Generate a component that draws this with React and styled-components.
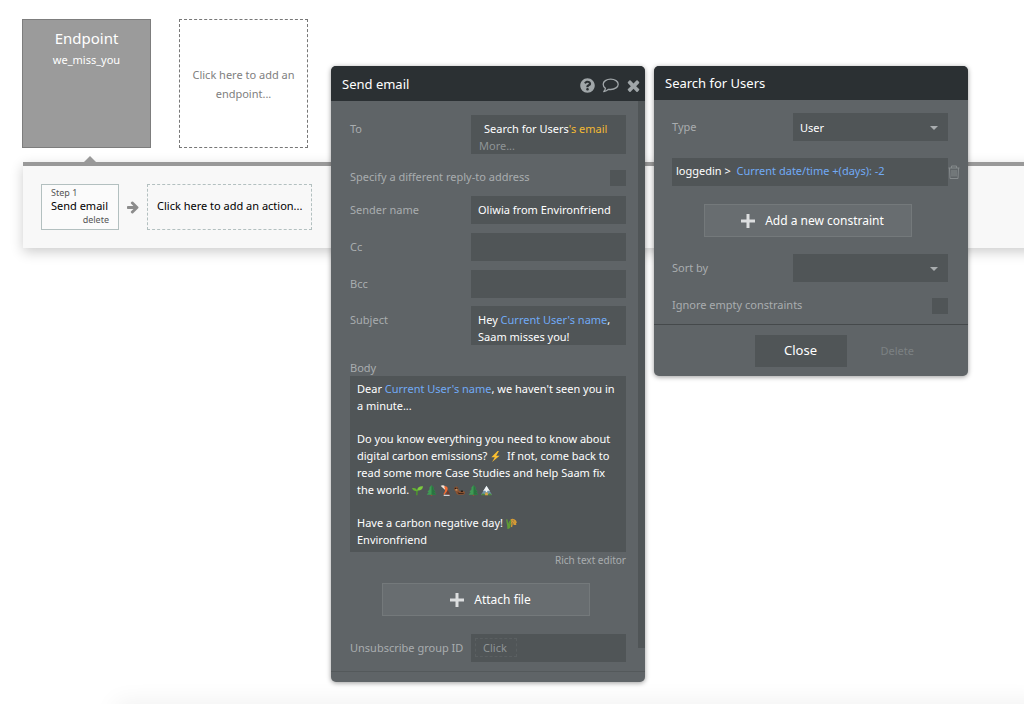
import React from 'react';
import styled, { createGlobalStyle } from 'styled-components';
import { FaQuestionCircle } from 'react-icons/fa';

const Icon = ({ size = 14, width, height, box = '0 0 16 16', children }) => (
    <svg
        width={width || size}
        height={height || size}
        viewBox={box}
        aria-hidden="true"
    >
        {children}
    </svg>
);

const ArrowIcon = () => (
    <Icon size={14} box="0 0 1792 1792">
        <path
            fill="currentColor"
            d="M1600 960q0 54-37 91l-651 651q-39 37-91 37-51 0-90-37l-75-75q-38-38-38-91t38-91l293-293H245q-52 0-84.5-37.5T128 1024V896q0-53 32.5-90.5T245 768h704L656 474q-38-36-38-90t38-90l75-75q38-38 90-38 53 0 91 38l651 651q37 35 37 90z"
        />
    </Icon>
);

const CommentIcon = () => (
    <Icon width={17} height={15} box="0 0 17 15">
        <path
            fill="none"
            stroke="currentColor"
            strokeWidth="1.3"
            strokeLinejoin="round"
            d="M8.7 1.200c4.200 0 7.500 2.200 7.500 5s-3.300 5.300-7.500 5.300c-.8 0-1.500-.1-2.200-.2-1.200 1.200-2.800 2-4.700 2.300 1-.9 1.500-2 1.600-3.300C2 9.300 1.200 7.800 1.200 6.200c0-2.800 3.300-5 7.500-5z"
        />
    </Icon>
);

const TimesIcon = () => (
    <Icon size={15} box="128 128 1536 1536">
        <path
            fill="currentColor"
            d="M1490 1322q0 40-28 68l-136 136q-28 28-68 28t-68-28l-294-294-294 294q-28 28-68 28t-68-28l-136-136q-28-28-28-68t28-68l294-294-294-294q-28-28-28-68t28-68l136-136q28-28 68-28t68 28l294 294 294-294q28-28 68-28t68 28l136 136q28 28 28 68t-28 68l-294 294 294 294q28 28 28 68z"
        />
    </Icon>
);

const PlusIcon = () => (
    <Icon size={14} box="0 0 14 14">
        <path fill="currentColor" d="M5.500 0h3v5.500H14v3H8.500V14h-3V8.500H0v-3h5.500z" />
    </Icon>
);

const TrashIcon = () => (
    <Icon width={12} height={14} box="0 0 12 14">
        <g fill="none" stroke="currentColor">
            <path d="M.5 3h11M3.500 3V1h5v2M1.500 3l.5 10.500h8L10.500 3" />
            <path d="M4 5v6.500M6 5v6.500M8 5v6.500" />
        </g>
    </Icon>
);

const emoji = {
    bolt: <path fill="#fbbf2f" d="M11 0 2 9h5l-4 7L14 7H9l4-7z" />,
    seedling: (
        <>
            <path fill="none" stroke="#4c9a2c" strokeWidth="2" d="M7 15c0-4 0-6 1-8" />
            <path fill="#63b233" d="M7.500 9C3 9.500 1 7 0 4.500 4 3.500 7 5 7.500 9z" />
            <path fill="#7ccb3e" d="M7.500 8C8 3.500 11 1.500 16 2c-.5 4-3.500 6.500-8.500 6z" />
        </>
    ),
    tree: (
        <>
            <path fill="#8a5530" d="M7 13h2v3H7z" />
            <path fill="#3f9a54" d="m8 0 4 5h-2l4 5h-2l3 4H1l3-4H2l4-5H4z" />
            <path fill="#2a7440" d="m8 0 4 5h-2l4 5h-2l3 4H8z" />
        </>
    ),
    climber: (
        <>
            <path fill="#6e3a2c" d="M10 7c3 2 4 5 5 8H8c2-2 3-4 2-8z" />
            <path fill="#f4e7dc" d="M1 1c4-2 7 0 7 3l-1 3C6 5 3 4 1 1z" />
            <path fill="#f06a32" d="M6 2c4-1 6 2 5 5-1 3-3 5-5 8l-1-2c2-3 3-5 2-8z" />
            <path fill="#cfd2d6" d="M6 14h8v2H5z" />
        </>
    ),
    otter: (
        <>
            <path
                fill="#8a5332"
                d="M0 5c0-3 5-4 6-1 1 2 0 4 3 5h5c3 0 2 5 0 5H6c-3 0-3-3-4-5-1-1-2-2-2-4z"
            />
            <path fill="#2b1a12" d="M1 4h2v2H1zM4 4h1v2H4zM5 10l3 2h6v1H7zM10 8h3v2h-3z" />
            <path fill="#d39c6c" d="M2 6h3v2H2z" />
        </>
    ),
    mountain: (
        <>
            <path fill="#6f93a8" d="m8 1 8 13H0z" />
            <path fill="#f3f5f6" d="m8 1 5 8-3-1-2 3-2-3-3 1z" />
            <path fill="#4b8a3a" d="M0 15c2-4 5-3 6 0zM10 15c1-4 4-4 6 0z" />
            <path fill="#d9a441" d="M6 11h4v4H6z" />
        </>
    ),
    rice: (
        <>
            <path
                fill="none"
                stroke="#5f9b35"
                strokeWidth="2"
                d="M3 16C3 9 5 5 8 3M1 2c1 5 2 9 2 14M5 15c0-4 1-7 3-9"
            />
            <path
                fill="none"
                stroke="#d59a35"
                strokeWidth="2"
                d="M7 3c3-2 7 0 8 4M8 4c2 0 4 3 4 6M8 5c1 2 1 5 0 8M11 3c1 0 3 4 3 7"
            />
        </>
    ),
};

const Emoji = ({ name, label }) => (
    <EmojiBox role="img" aria-label={label}>
        <Icon size={11}>{emoji[name]}</Icon>
    </EmojiBox>
);

function SendEmailWindow() {
    return (
        <SendWindow aria-label="Send email">
            <Header>
                <Title>Send email</Title>
                <HeaderIcons>
                    <IconButton aria-label="Help">
                        <FaQuestionCircle size={15} />
                    </IconButton>
                    <IconButton aria-label="Comment">
                        <CommentIcon />
                    </IconButton>
                    <IconButton aria-label="Close window">
                        <TimesIcon />
                    </IconButton>
                </HeaderIcons>
            </Header>
            <Scroller>
                <Form>
                    <Row>
                        <Label id="to">To</Label>
                        <RichField
                            role="textbox"
                            aria-labelledby="to"
                            contentEditable
                            suppressContentEditableWarning
                        >
                            <Indent>
                                Search for Users<Operator>'s email</Operator>
                            </Indent>
                            <Muted>More...</Muted>
                        </RichField>
                    </Row>
                    <Row $top={16}>
                        <Label as="label" htmlFor="replyTo" $inline>
                            Specify a different reply-to address
                        </Label>
                        <Checkbox id="replyTo" />
                    </Row>
                    <Row $top={10}>
                        <Label as="label" htmlFor="sender">Sender name</Label>
                        <TextInput id="sender" defaultValue="Oliwia from Environfriend" />
                    </Row>
                    <Row $top={9}>
                        <Label as="label" htmlFor="cc">Cc</Label>
                        <TextInput id="cc" />
                    </Row>
                    <Row $top={9}>
                        <Label as="label" htmlFor="bcc">Bcc</Label>
                        <TextInput id="bcc" />
                    </Row>
                    <Row $top={8}>
                        <Label id="subject">Subject</Label>
                        <RichField
                            role="textbox"
                            aria-labelledby="subject"
                            contentEditable
                            suppressContentEditableWarning
                        >
                            Hey <Dynamic>Current User's name</Dynamic>, Saam misses you!
                        </RichField>
                    </Row>
                    <BodyLabel id="body">Body</BodyLabel>
                    <BodyField
                        role="textbox"
                        aria-multiline="true"
                        aria-labelledby="body"
                        contentEditable
                        suppressContentEditableWarning
                    >
                        <p>
                            Dear <Dynamic>Current User's name</Dynamic>, we haven't
                            seen you in a minute...
                        </p>
                        <p>
                            Do you know everything you need to know about digital
                            carbon emissions? <Emoji name="bolt" label="lightning" />
                            &nbsp; If not, come back to read some more Case Studies
                            and help Saam fix the world.{' '}
                            <Emoji name="seedling" label="seedling" />{' '}
                            <Emoji name="tree" label="tree" />{' '}
                            <Emoji name="climber" label="climber" />{' '}
                            <Emoji name="otter" label="otter" />{' '}
                            <Emoji name="tree" label="tree" />{' '}
                            <Emoji name="mountain" label="mountain" />
                        </p>
                        <p>
                            Have a carbon negative day! <Emoji name="rice" label="rice" />
                            <br />
                            Environfriend
                        </p>
                    </BodyField>
                    <EditorLink href="#editor">Rich text editor</EditorLink>
                    <AddButton $top={14}>
                        <PlusIcon />
                        Attach file
                    </AddButton>
                    <Row $top={18}>
                        <Label as="label" htmlFor="group">Unsubscribe group ID</Label>
                        <GroupField>
                            <GroupInput id="group" placeholder="Click" />
                        </GroupField>
                    </Row>
                </Form>
                <WindowFoot />
            </Scroller>
        </SendWindow>
    );
}

function SearchWindow() {
    return (
        <SearchPanel aria-label="Search for Users">
            <Header $short>
                <Title>Search for Users</Title>
            </Header>
            <SearchForm>
                <Row>
                    <Label as="label" htmlFor="type">Type</Label>
                    <SelectWrap>
                        <Select id="type">
                            <option>User</option>
                        </Select>
                    </SelectWrap>
                </Row>
                <Constraint>
                    <ConstraintField
                        role="textbox"
                        aria-label="Constraint"
                        contentEditable
                        suppressContentEditableWarning
                    >
                        loggedin &gt;&nbsp; <Dynamic>Current date/time +(days): -2</Dynamic>
                    </ConstraintField>
                    <TrashButton aria-label="Remove constraint">
                        <TrashIcon />
                    </TrashButton>
                </Constraint>
                <AddButton $top={18}>
                    <PlusIcon />
                    Add a new constraint
                </AddButton>
                <Row $top={17}>
                    <Label as="label" htmlFor="sort">Sort by</Label>
                    <SelectWrap>
                        <Select id="sort">
                            <option> </option>
                        </Select>
                    </SelectWrap>
                </Row>
                <Row $top={16}>
                    <Label as="label" htmlFor="ignore" $inline>Ignore empty constraints</Label>
                    <Checkbox id="ignore" />
                </Row>
            </SearchForm>
            <Footer>
                <CloseButton>Close</CloseButton>
                <DeleteButton disabled>Delete</DeleteButton>
            </Footer>
        </SearchPanel>
    );
}

function App() {
    return (
        <Page>
            <GlobalStyle />
            <Endpoints>
                <Endpoint>
                    <EndpointType>Endpoint</EndpointType>
                    <EndpointName>we_miss_you</EndpointName>
                </Endpoint>
                <NewEndpoint>Click here to add an endpoint...</NewEndpoint>
            </Endpoints>
            <Workflow>
                <Step>
                    <StepNote>Step 1</StepNote>
                    <StepName>Send email</StepName>
                    <StepDelete>delete</StepDelete>
                </Step>
                <ArrowIcon />
                <NewAction>Click here to add an action...</NewAction>
            </Workflow>
            <SendEmailWindow />
            <SearchWindow />
        </Page>
    );
}

export default App;

const GlobalStyle = createGlobalStyle`
    * {
        box-sizing: border-box;
    }

    body {
        margin: 0;
        background: #fff;
        font-family: 'Noto Sans', 'Open Sans', sans-serif;
        font-size: 11px;
        line-height: 17px;
    }

    p {
        margin: 0;
    }

    button,
    input,
    select {
        margin: 0;
        padding: 0;
        border: 0;
        border-radius: 0;
        background: none;
        color: inherit;
        font: inherit;
    }
`;

const Page = styled.main`
    position: relative;
    min-height: 100vh;
    padding: 19px 0 0 22px;
    overflow: hidden;

    &::after {
        content: '';
        position: absolute;
        right: -20px;
        bottom: -12px;
        left: 116px;
        height: 10px;
        box-shadow: 0 0 24px rgba(0, 0, 0, 0.12);
    }
`;

const Endpoints = styled.div`
    display: flex;
    gap: 28px;
`;

const Endpoint = styled.button`
    width: 129px;
    height: 129px;
    padding-top: 7px;
    border: 1px solid #7d7d7d;
    background: #9b9b9b;
    color: #fff;
    display: flex;
    flex-direction: column;
    align-items: center;
`;

const EndpointType = styled.span`
    font-size: 15px;
    line-height: 22px;
`;

const EndpointName = styled.span`
    line-height: 22px;
`;

const NewEndpoint = styled.button`
    width: 129px;
    height: 129px;
    padding: 0 8px;
    border: 1px dashed #777;
    color: #808080;
    line-height: 19px;
`;

const Workflow = styled.section`
    position: relative;
    display: flex;
    align-items: center;
    gap: 7px;
    margin: 14px -20px 0 1px;
    padding: 18px;
    border-top: 4px solid #999;
    background: #f8f8f8;
    color: #8c8c8c;
    box-shadow: 0 4px 12px rgba(0, 0, 0, 0.2);

    &::before {
        content: '';
        position: absolute;
        top: -10px;
        left: 60px;
        border: 7px solid transparent;
        border-top: 0;
        border-bottom-color: #999;
    }
`;

const Step = styled.div`
    width: 78px;
    height: 46px;
    padding: 0 9px;
    border: 1px solid #b3c0c0;
    background: #fbfbfb;
    display: flex;
    flex-direction: column;
`;

const StepNote = styled.span`
    color: #555;
    font-size: 9px;
    line-height: 15px;
`;

const StepName = styled.span`
    color: #000;
    line-height: 12px;
    white-space: nowrap;
`;

const StepDelete = styled.button`
    align-self: flex-end;
    color: #555;
    font-size: 9px;
    line-height: 15px;
`;

const NewAction = styled.button`
    height: 46px;
    padding: 0 9px 4px;
    border: 1px dashed #b3c0c0;
    color: #000;
`;

const Window = styled.section`
    position: absolute;
    top: 66px;
    width: 314px;
    border-radius: 5px;
    overflow: hidden;
    background: #5f6467;
    color: #fff;
    box-shadow: 0 1px 5px rgba(0, 0, 0, 0.4);
`;

const SendWindow = styled(Window)`
    left: 331px;
`;

const SearchPanel = styled(Window)`
    left: 654px;
`;

const Header = styled.header`
    display: flex;
    align-items: center;
    justify-content: space-between;
    height: ${(prop) => (prop.$short ? 34 : 35)}px;
    padding: 0 4px 0 11px;
    background: #2b3033;
`;

const Title = styled.h1`
    margin: 0;
    font-size: 13px;
    font-weight: 400;
    line-height: 20px;
`;

const HeaderIcons = styled.div`
    display: flex;
    gap: 7px;
    padding-top: 3px;
    color: #a0a6a9;
`;

const IconButton = styled.button`
    display: flex;
    align-items: center;
`;

const Scroller = styled.div`
    position: relative;

    &::after {
        content: '';
        position: absolute;
        top: 0;
        right: 0;
        bottom: 34px;
        width: 7px;
        background: #505557;
    }
`;

const Form = styled.form`
    display: flex;
    flex-direction: column;
    padding: 14px 19px 9px;
`;

const SearchForm = styled(Form)`
    padding: 13px 20px 10px 18px;
`;

const Row = styled.div`
    display: flex;
    justify-content: space-between;
    align-items: flex-start;
    margin-top: ${(prop) => prop.$top || 0}px;
`;

const Label = styled.span`
    padding-top: ${(prop) => (prop.$inline ? 0 : 5)}px;
    color: #a9adaf;
    line-height: ${(prop) => (prop.$inline ? 14 : 17)}px;
    white-space: nowrap;
`;

const RichField = styled.div`
    width: 155px;
    height: 39px;
    padding: 5px 7px 0;
    overflow: hidden;
    background: #505557;
    outline: none;
`;

const Indent = styled.div`
    padding-left: 6px;
    white-space: nowrap;
`;

const Operator = styled.span`
    color: #f2b933;
`;

const Dynamic = styled.span`
    color: #71aaf5;
`;

const Muted = styled.div`
    padding-left: 1px;
    color: #8f9496;
`;

const TextInput = styled.input`
    width: 155px;
    height: 28px;
    padding: 0 7px 1px;
    background: #505557;
    outline: none;
`;

const GroupField = styled.div`
    width: 155px;
    height: 28px;
    padding: 4px;
    background: #505557;
`;

const GroupInput = styled.input`
    display: block;
    width: 42px;
    height: 19px;
    padding: 0 7px;
    border: 1px dashed #5a5f61;
    outline: none;

    &::placeholder {
        color: #8f9496;
        opacity: 1;
    }
`;

const Checkbox = styled.input.attrs({ type: 'checkbox' })`
    appearance: none;
    width: 16px;
    height: 16px;
    background: #505557;
`;

const BodyLabel = styled(Label)`
    margin-top: 9px;
`;

const BodyField = styled.div`
    display: flex;
    flex-direction: column;
    gap: 16px;
    height: 176px;
    padding: 4px 7px 0;
    background: #505557;
    outline: none;
`;

const EmojiBox = styled.span`
    svg {
        vertical-align: -2px;
    }
`;

const EditorLink = styled.a`
    align-self: flex-end;
    color: #a9adaf;
    font-size: 10px;
    text-decoration: none;
`;

const AddButton = styled.button`
    display: flex;
    align-items: center;
    justify-content: center;
    align-self: center;
    gap: 10px;
    width: 208px;
    height: 33px;
    margin: ${(prop) => prop.$top}px 4px 0 0;
    padding-left: 9px;
    border: 1px solid #74797b;
    background: #686d70;
    font-size: 12px;

    svg {
        color: #dcdedf;
    }
`;

const WindowFoot = styled.div`
    height: 11px;
    border-top: 1px solid #54595b;
`;

const SelectWrap = styled.div`
    position: relative;
    color: #fff;

    &::after {
        content: '';
        position: absolute;
        top: 13px;
        right: 10px;
        border: 4px solid transparent;
        border-top-color: #a9adaf;
        border-bottom: 0;
        pointer-events: none;
    }
`;

const Select = styled.select`
    appearance: none;
    display: block;
    width: 155px;
    height: 28px;
    padding: 0 7px;
    background: #505557;
`;

const Constraint = styled.div`
    display: flex;
    align-items: center;
    margin: 17px -12px 0 0;
`;

const ConstraintField = styled.div`
    flex: 1;
    height: 28px;
    padding: 4px;
    background: #505557;
    outline: none;
`;

const TrashButton = styled.button`
    display: flex;
    color: #868b8d;
`;

const Footer = styled.footer`
    display: flex;
    justify-content: flex-end;
    align-items: center;
    gap: 34px;
    height: 52px;
    padding-right: 54px;
    border-top: 1px solid #45494b;
`;

const CloseButton = styled.button`
    width: 92px;
    height: 32px;
    background: #505557;
    font-size: 13px;
`;

const DeleteButton = styled.button`
    color: #7c8183;
`;
